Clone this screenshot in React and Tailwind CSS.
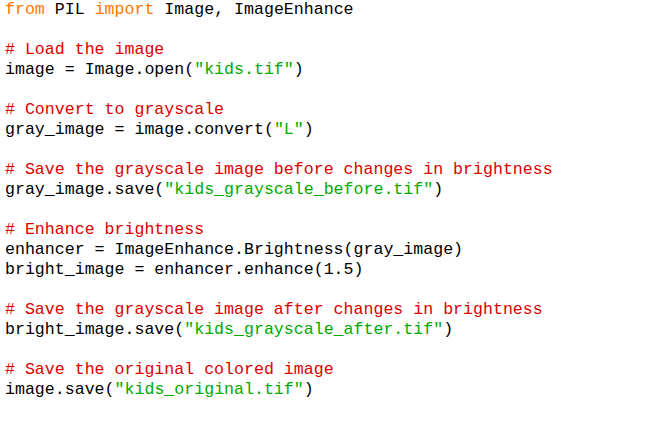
const lines = [
  [["k", "from"], ["", " PIL "], ["k", "import"], ["", " Image, ImageEnhance"]],
  [],
  [["c", "# Load the image"]],
  [["", "image = Image.open("], ["s", "\"kids.tif\""], ["", ")"]],
  [],
  [["c", "# Convert to grayscale"]],
  [["", "gray_image = image.convert("], ["s", "\"L\""], ["", ")"]],
  [],
  [["c", "# Save the grayscale image before changes in brightness"]],
  [["", "gray_image.save("], ["s", "\"kids_grayscale_before.tif\""], ["", ")"]],
  [],
  [["c", "# Enhance brightness"]],
  [["", "enhancer = ImageEnhance.Brightness(gray_image)"]],
  [["", "bright_image = enhancer.enhance(1.5)"]],
  [],
  [["c", "# Save the grayscale image after changes in brightness"]],
  [["", "bright_image.save("], ["s", "\"kids_grayscale_after.tif\""], ["", ")"]],
  [],
  [["c", "# Save the original colored image"]],
  [["", "image.save("], ["s", "\"kids_original.tif\""], ["", ")"]],
];

const colors = {
  k: "text-[#ff7700]",
  c: "text-[#dd0000]",
  s: "text-[#00aa00]",
  "": "text-black",
};

export default function App() {
  return (
    <div className="w-[667px] h-[428px] bg-white overflow-hidden">
      <pre className="pl-[5px] pt-0 font-['Liberation_Mono','Courier_New',monospace] text-[16.6px] leading-[20px] text-black">
        {lines.map((line, i) => (
          <div key={i} className="h-[20px] whitespace-pre">
            {line.map(([t, txt], j) => (
              <span key={j} className={colors[t]}>{txt}</span>
            ))}
          </div>
        ))}
      </pre>
    </div>
  );
}
